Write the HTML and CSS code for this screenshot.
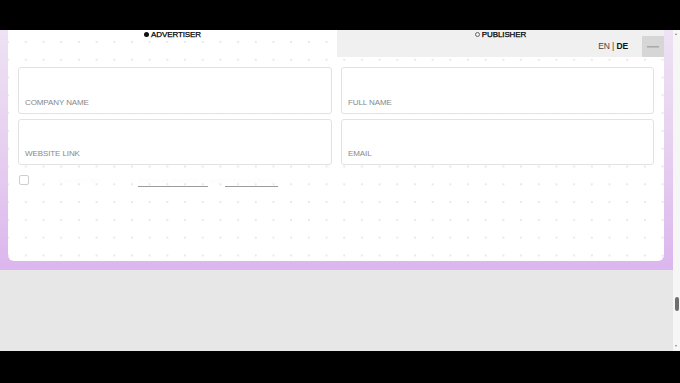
FILE: index.html
```html
<!DOCTYPE html>
<html lang="en">
<head>
<meta charset="utf-8">
<title>Signup</title>
<link rel="stylesheet" href="styles.css">
</head>
<body>
<div class="bar-top"></div>
<div class="viewport">
  <div class="page">
    <div class="hero">
      <div class="card">
        <div class="tabs">
          <div class="tab tab-active"><span class="dot dot-filled"></span>ADVERTISER</div>
          <div class="tab tab-idle">
            <div class="tab-label"><span class="dot dot-empty"></span>PUBLISHER</div>
            <div class="tools">
              <span class="lang">EN <span class="sep">|</span> <b>DE</b></span>
              <button class="menu" aria-label="Menu"><span></span></button>
            </div>
          </div>
        </div>
        <form class="form">
          <label class="field"><span>COMPANY NAME</span></label>
          <label class="field"><span>FULL NAME</span></label>
          <label class="field"><span>WEBSITE LINK</span></label>
          <label class="field"><span>EMAIL</span></label>
        </form>
        <div class="consent">
          <span class="box"></span>
          <span class="consent-text"><span class="lead">I accept the</span><a class="link link-terms">Terms of Service</a><span class="and">and</span><a class="link link-privacy">Privacy Policy</a></span>
        </div>
      </div>
    </div>
    <div class="footer"></div>
  </div>
  <div class="scrollbar">
    <span class="arrow arrow-up"></span>
    <span class="thumb"></span>
    <span class="arrow arrow-down"></span>
  </div>
</div>
<div class="bar-bottom"></div>
</body>
</html>
```

FILE: styles.css
```css
* { box-sizing: border-box; }
html, body { margin: 0; padding: 0; }
body {
  background: #000;
  font-family: "Liberation Sans", Arial, sans-serif;
  width: 680px;
  height: 383px;
  overflow: hidden;
}
.bar-top { height: 30px; background: #000; }
.bar-bottom { height: 32px; background: #000; }
.viewport {
  height: 321px;
  display: flex;
}
.page {
  flex: 1;
  display: flex;
  flex-direction: column;
  background: #e8e7e8;
}
.hero {
  padding: 0 9px 9px 8px;
  background: linear-gradient(to bottom, #eee2f3 0%, #e6cff0 50%, #dcb6ee 100%);
}
.card {
  height: 231px;
  background-color: #fff;
  background-image: radial-gradient(circle, #e9e9e9 0.9px, transparent 1.3px);
  background-size: 17.7px 17.8px;
  background-position: 9px 3px;
  border-radius: 0 0 6px 6px;
  overflow: hidden;
}
.tabs {
  display: flex;
  height: 27px;
}
.tab {
  font-size: 8px;
  line-height: 8px;
  color: #000;
  letter-spacing: -0.1px;
  -webkit-text-stroke: 0.25px #000;
}
.tab-active {
  width: 329px;
  text-align: center;
  padding-top: 1px;
}
.tab-idle {
  flex: 1;
  background: #f0f0f0;
  display: flex;
  flex-direction: column;
  padding-top: 1px;
}
.tab-label { text-align: center; height: 8px; }
.dot {
  display: inline-block;
  width: 5px;
  height: 5px;
  border-radius: 50%;
  margin-right: 2px;
  vertical-align: 0;
}
.dot-filled { background: #111; }
.dot-empty { border: 1px solid #666; }
.tools {
  flex: 1;
  display: flex;
  justify-content: flex-end;
  align-items: flex-end;
  margin-top: -3px;
  -webkit-text-stroke: 0;
}
.lang {
  font-size: 8.5px;
  line-height: 21px;
  color: #444;
  margin-right: 14px;
  letter-spacing: -0.1px;
}
.lang b { color: #111; font-weight: 700; }
.sep { color: #333; }
.menu {
  width: 22px;
  height: 21px;
  border: 0;
  padding: 0;
  background: #d6d6d6;
  display: flex;
  align-items: center;
  justify-content: center;
}
.menu span {
  display: block;
  width: 12px;
  height: 2px;
  border-top: 1px solid #a9a9a9;
  border-bottom: 1px solid #bdbdbd;
}
.form {
  margin: 10px 10px 0 10px;
  display: grid;
  grid-template-columns: 314px 313px;
  grid-template-rows: 47px 46px;
  column-gap: 9px;
  row-gap: 5px;
}
.field {
  border: 1px solid #e2e2e2;
  border-radius: 3px;
  background: #fff;
  display: flex;
  align-items: flex-end;
  padding: 0 6px 6px 6px;
}
.field span {
  font-size: 8px;
  line-height: 8px;
  color: #888;
  letter-spacing: -0.1px;
}
.consent {
  margin: 10px 0 0 11px;
  display: flex;
  align-items: flex-start;
  height: 12px;
}
.box {
  width: 10px;
  height: 10px;
  border: 1px solid #cfcfcf;
  border-radius: 2px;
  background: #fff;
  flex: none;
}
.consent-text {
  display: flex;
  align-items: flex-start;
  font-size: 8px;
  line-height: 11px;
  color: #fcfcfc;
  white-space: nowrap;
}
.lead {
  display: inline-block;
  width: 109px;
  padding-left: 30px;
  overflow: hidden;
}
.and {
  display: inline-block;
  width: 17px;
  text-align: center;
  overflow: hidden;
}
.link {
  display: inline-block;
  overflow: hidden;
  border-bottom: 1px solid #9c9c9c;
  color: #fcfcfc;
}
.link-terms { width: 70px; }
.link-privacy { width: 53px; }
.footer {
  flex: 1;
  background: #e8e7e8;
}
.scrollbar {
  width: 7px;
  background: #f6f6f6;
  position: relative;
}
.thumb {
  position: absolute;
  left: 2px;
  top: 267px;
  width: 4px;
  height: 14px;
  border-radius: 2px;
  background: #6f6f6f;
}
.arrow {
  position: absolute;
  left: 2px;
  width: 0;
  height: 0;
  border-left: 1.5px solid transparent;
  border-right: 1.5px solid transparent;
}
.arrow-up { top: 3px; border-bottom: 2px solid #888; }
.arrow-down { bottom: 4px; border-top: 2px solid #888; }
```
